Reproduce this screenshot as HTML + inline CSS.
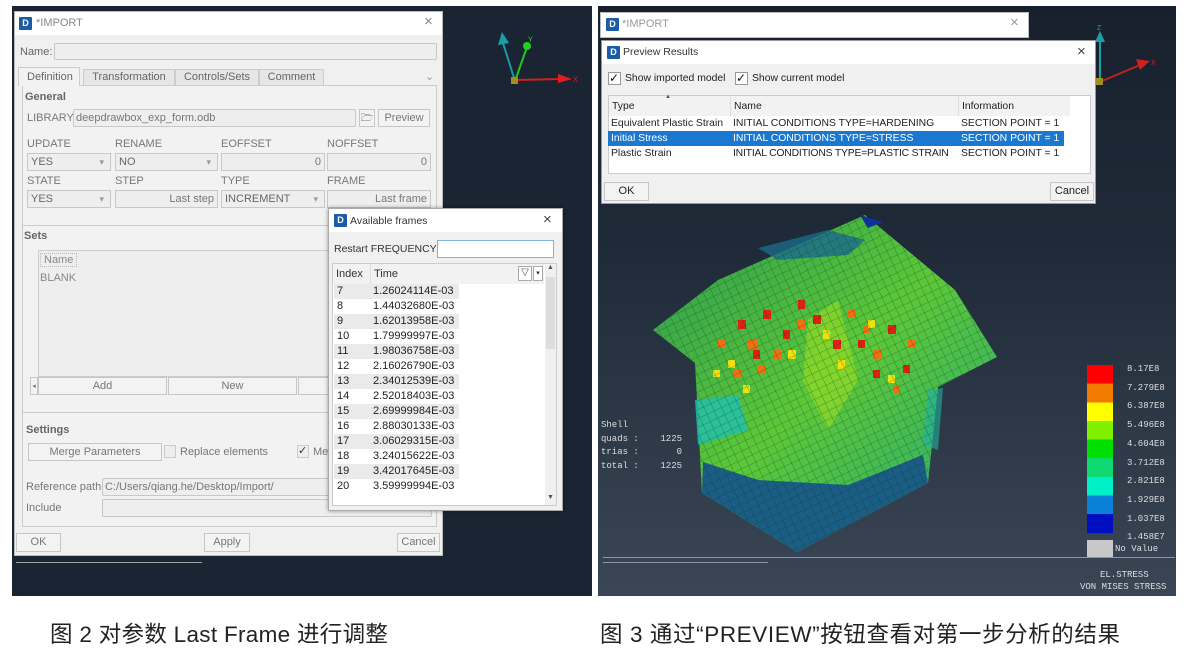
<!DOCTYPE html>
<html><head><meta charset="utf-8"><style>
*{box-sizing:border-box;margin:0;padding:0}
body{width:1192px;height:651px;background:#fff;position:relative;overflow:hidden;font-family:"Liberation Sans",sans-serif;font-size:11px;color:#333}
.a{position:absolute}
.inp{position:absolute;background:#eee;border:1px solid #c8c8c8;border-radius:2px}
.btn{position:absolute;background:#f3f3f3;border:1px solid #c6c6c6;text-align:center;color:#777;line-height:17px}
.lbl{position:absolute;color:#777;white-space:nowrap}
.cb{position:absolute;background:#eee;border:1px solid #c8c8c8;color:#666;padding-left:3px;line-height:16px}
.dd:after{content:"▾";position:absolute;right:6px;color:#999;font-size:9px}
.r{text-align:right;padding-right:3px;color:#777}
.logo{position:absolute;width:13px;height:13px;background:#1b5ca8;color:#fff;font-size:9px;font-weight:bold;text-align:center;line-height:13px;border-radius:1px}
.mono{font-family:"Liberation Mono",monospace;color:#ddd;font-size:9px}
.row{position:absolute;left:0;width:125px;height:15px;line-height:15px}
.cap{position:absolute;top:617px;font-size:22.5px;color:#222;font-family:"Liberation Sans","Noto Sans CJK SC",sans-serif;white-space:nowrap}
.pt{font-size:10.4px;color:#222}
</style></head><body>

<!-- LEFT SCREEN -->
<div class="a" style="left:12px;top:6px;width:580px;height:590px;background:#1b2433"></div>
<div class="a" style="left:16px;top:562px;width:186px;height:1px;background:#9aa"></div>
<svg class="a" style="left:480px;top:25px" width="110" height="75">
<line x1="35" y1="56" x2="23" y2="18" stroke="#1a9aa0" stroke-width="2"/><polygon points="18,20 22,7 29,18" fill="#1aa0a6"/>
<line x1="35" y1="56" x2="47" y2="22" stroke="#1ec81e" stroke-width="2"/><circle cx="47" cy="21" r="4" fill="#22d022"/>
<line x1="37" y1="55" x2="80" y2="54" stroke="#d02020" stroke-width="2"/><polygon points="78,49 92,54 78,58" fill="#e02020"/>
<rect x="31" y="52" width="7" height="7" fill="#a09020"/>
<text x="20" y="16" fill="#1a9aa0" font-size="8" font-family="Liberation Mono">Z</text>
<text x="48" y="17" fill="#2c2" font-size="8" font-family="Liberation Mono">Y</text>
<text x="93" y="57" fill="#c22" font-size="8" font-family="Liberation Mono">X</text></svg>

<div class="a" style="left:14px;top:11px;width:429px;height:545px;background:#f0f0f0;border:1px solid #bbb"></div>
<div class="a" style="left:15px;top:12px;width:427px;height:23px;background:#fff"></div>
<div class="logo" style="left:19px;top:17px">D</div>
<div class="lbl" style="left:36px;top:17px;color:#888">*IMPORT</div>
<div class="lbl" style="left:424px;top:13px;font-size:15px;color:#888">×</div>
<div class="lbl" style="left:20px;top:46px;color:#666">Name:</div>
<div class="inp" style="left:54px;top:43px;width:383px;height:17px"></div>
<div class="a" style="left:22px;top:85px;width:415px;height:442px;border:1px solid #ccc;background:#f2f2f2"></div>
<div class="a" style="left:18px;top:67px;width:62px;height:19px;background:#f2f2f2;border:1px solid #ccc;border-bottom:none;color:#666;padding:3px 0 0 8px">Definition</div>
<div class="a" style="left:83px;top:69px;width:92px;height:17px;background:#e6e6e6;border:1px solid #ccc;color:#666;text-align:center;line-height:15px">Transformation</div>
<div class="a" style="left:175px;top:69px;width:84px;height:17px;background:#e6e6e6;border:1px solid #ccc;color:#666;text-align:center;line-height:15px">Controls/Sets</div>
<div class="a" style="left:259px;top:69px;width:65px;height:17px;background:#e6e6e6;border:1px solid #ccc;color:#666;text-align:center;line-height:15px">Comment</div>
<div class="lbl" style="left:425px;top:70px;color:#999">⌄</div>
<div class="lbl" style="left:25px;top:91px;font-weight:bold;color:#666">General</div>
<div class="lbl" style="left:27px;top:112px">LIBRARY</div>
<div class="inp" style="left:73px;top:109px;width:283px;height:18px;color:#777;padding-left:2px;line-height:16px">deepdrawbox_exp_form.odb</div>
<div class="btn" style="left:359px;top:109px;width:16px;height:18px;font-size:10px">🗁</div>
<div class="btn" style="left:378px;top:109px;width:52px;height:18px">Preview</div>
<div class="lbl" style="left:27px;top:138px">UPDATE</div><div class="lbl" style="left:115px;top:138px">RENAME</div><div class="lbl" style="left:221px;top:138px">EOFFSET</div><div class="lbl" style="left:327px;top:138px">NOFFSET</div>
<div class="cb dd" style="left:27px;top:153px;width:84px;height:18px">YES</div>
<div class="cb dd" style="left:115px;top:153px;width:103px;height:18px">NO</div>
<div class="cb r" style="left:221px;top:153px;width:104px;height:18px">0</div>
<div class="cb r" style="left:327px;top:153px;width:104px;height:18px">0</div>
<div class="lbl" style="left:27px;top:175px">STATE</div><div class="lbl" style="left:115px;top:175px">STEP</div><div class="lbl" style="left:221px;top:175px">TYPE</div><div class="lbl" style="left:327px;top:175px">FRAME</div>
<div class="cb dd" style="left:27px;top:190px;width:84px;height:18px">YES</div>
<div class="cb r" style="left:115px;top:190px;width:103px;height:18px">Last step</div>
<div class="cb dd" style="left:221px;top:190px;width:104px;height:18px">INCREMENT</div>
<div class="cb r" style="left:327px;top:190px;width:104px;height:18px">Last frame</div>
<div class="a" style="left:23px;top:225px;width:413px;height:1px;background:#ccc"></div>
<div class="lbl" style="left:24px;top:230px;font-weight:bold;color:#666">Sets</div>
<div class="a" style="left:38px;top:250px;width:300px;height:127px;border:1px solid #ccc;background:#eee"></div>
<div class="lbl" style="left:40px;top:253px;border:1px dotted #bbb;padding:0 3px;color:#888">Name</div>
<div class="lbl" style="left:40px;top:272px;color:#888">BLANK</div>
<div class="btn" style="left:30px;top:377px;width:8px;height:18px;font-size:7px">◂</div>
<div class="btn" style="left:38px;top:377px;width:129px;height:18px">Add</div>
<div class="btn" style="left:168px;top:377px;width:129px;height:18px">New</div>
<div class="btn" style="left:298px;top:377px;width:40px;height:18px"></div>
<div class="a" style="left:23px;top:412px;width:413px;height:1px;background:#ccc"></div>
<div class="lbl" style="left:26px;top:424px;font-weight:bold;color:#666">Settings</div>
<div class="btn" style="left:28px;top:443px;width:134px;height:18px">Merge Parameters</div>
<div class="a" style="left:164px;top:445px;width:12px;height:13px;border:1px solid #ccc;background:#eee"></div>
<div class="lbl" style="left:180px;top:446px">Replace elements</div>
<div class="a" style="left:297px;top:445px;width:12px;height:13px;border:1px solid #ccc;background:#eee;font-size:11px;line-height:11px;color:#333">✓</div>
<div class="lbl" style="left:313px;top:446px">Me</div>
<div class="lbl" style="left:26px;top:481px">Reference path</div>
<div class="inp" style="left:102px;top:478px;width:330px;height:18px;color:#777;padding-left:2px;line-height:16px">C:/Users/qiang.he/Desktop/Import/</div>
<div class="lbl" style="left:26px;top:502px">Include</div>
<div class="inp" style="left:102px;top:499px;width:330px;height:18px"></div>
<div class="btn" style="left:16px;top:533px;width:45px;height:19px">OK</div>
<div class="btn" style="left:204px;top:533px;width:46px;height:19px">Apply</div>
<div class="btn" style="left:397px;top:533px;width:43px;height:19px">Cancel</div>

<!-- Available frames -->
<div class="a" style="left:328px;top:208px;width:235px;height:303px;background:#f0f0f0;border:1px solid #aaa;box-shadow:0 0 4px rgba(0,0,0,.4)"></div>
<div class="a" style="left:329px;top:209px;width:233px;height:23px;background:#fff"></div>
<div class="logo" style="left:334px;top:214px">D</div>
<div class="lbl" style="left:350px;top:215px;color:#333;font-size:10.5px">Available frames</div>
<div class="lbl" style="left:543px;top:211px;font-size:15px;color:#444">×</div>
<div class="lbl" style="left:334px;top:243px;color:#333;font-size:10.5px">Restart FREQUENCY</div>
<div class="a" style="left:437px;top:240px;width:117px;height:18px;background:#fff;border:1px solid #7fb4e0"></div>
<div class="a" style="left:332px;top:263px;width:225px;height:243px;background:#fff;border:1px solid #ccc"></div>
<div class="a" style="left:333px;top:264px;width:211px;height:20px;background:#f2f2f2"></div>
<div class="lbl" style="left:336px;top:268px;color:#333">Index</div>
<div class="a" style="left:370px;top:264px;width:1px;height:20px;background:#ddd"></div>
<div class="lbl" style="left:374px;top:268px;color:#333">Time</div>
<div class="a" style="left:518px;top:266px;width:14px;height:15px;border:1px solid #aaa;background:#fff;font-size:10px;text-align:center;color:#555">▽</div>
<div class="a" style="left:533px;top:266px;width:10px;height:15px;border:1px solid #aaa;background:#fff;font-size:7px;text-align:center;line-height:14px">▾</div>
<div class="a" style="left:545px;top:264px;width:11px;height:241px;background:#f0f0f0"></div>
<div class="a" style="left:546px;top:277px;width:9px;height:72px;background:#ddd"></div>
<div class="lbl" style="left:547px;top:264px;font-size:7px;color:#555">▲</div>
<div class="lbl" style="left:547px;top:494px;font-size:7px;color:#555">▼</div>
<div class="a" style="left:334px;top:284px;width:125px;height:210px;color:#222">
<div class="row" style="top:0;background:#eaeaea">&nbsp;7<span class="a" style="left:39px">1.26024114E-03</span></div>
<div class="row" style="top:15px">&nbsp;8<span class="a" style="left:39px">1.44032680E-03</span></div>
<div class="row" style="top:30px;background:#eaeaea">&nbsp;9<span class="a" style="left:39px">1.62013958E-03</span></div>
<div class="row" style="top:45px">&nbsp;10<span class="a" style="left:39px">1.79999997E-03</span></div>
<div class="row" style="top:60px;background:#eaeaea">&nbsp;11<span class="a" style="left:39px">1.98036758E-03</span></div>
<div class="row" style="top:75px">&nbsp;12<span class="a" style="left:39px">2.16026790E-03</span></div>
<div class="row" style="top:90px;background:#eaeaea">&nbsp;13<span class="a" style="left:39px">2.34012539E-03</span></div>
<div class="row" style="top:105px">&nbsp;14<span class="a" style="left:39px">2.52018403E-03</span></div>
<div class="row" style="top:120px;background:#eaeaea">&nbsp;15<span class="a" style="left:39px">2.69999984E-03</span></div>
<div class="row" style="top:135px">&nbsp;16<span class="a" style="left:39px">2.88030133E-03</span></div>
<div class="row" style="top:150px;background:#eaeaea">&nbsp;17<span class="a" style="left:39px">3.06029315E-03</span></div>
<div class="row" style="top:165px">&nbsp;18<span class="a" style="left:39px">3.24015622E-03</span></div>
<div class="row" style="top:180px;background:#eaeaea">&nbsp;19<span class="a" style="left:39px">3.42017645E-03</span></div>
<div class="row" style="top:195px">&nbsp;20<span class="a" style="left:39px">3.59999994E-03</span></div>
</div>

<!-- RIGHT SCREEN -->
<div class="a" style="left:598px;top:6px;width:578px;height:590px;background:linear-gradient(#18202d 0%,#1f2a38 40%,#3a4655 100%)"></div>
<svg class="a" style="left:1080px;top:25px" width="95" height="70">
<line x1="20" y1="57" x2="20" y2="15" stroke="#1aa0a6" stroke-width="2"/><polygon points="15,17 20,6 25,17" fill="#1aa0a6"/>
<line x1="22" y1="56" x2="60" y2="40" stroke="#c02020" stroke-width="2"/><polygon points="56,34 70,36 60,45" fill="#d02020"/>
<rect x="16" y="53" width="7" height="7" fill="#a09020"/>
<text x="17" y="5" fill="#1aa0a6" font-size="7" font-family="Liberation Mono">Z</text>
<text x="71" y="40" fill="#c22" font-size="8" font-family="Liberation Mono">X</text></svg>

<svg class="a" style="left:598px;top:200px" width="560" height="370">
<defs><pattern id="g" width="8" height="8" patternUnits="userSpaceOnUse" patternTransform="rotate(-25)"><path d="M0 0H8M0 0V8" stroke="#103020" stroke-width="0.8" fill="none" opacity=".55"/></pattern>
<linearGradient id="lg" x1="0" y1="0" x2="1" y2="1"><stop offset="0" stop-color="#2a9a50"/><stop offset=".5" stop-color="#5cc838"/><stop offset="1" stop-color="#22a878"/></linearGradient></defs>
<polygon points="55,130 120,80 267,15 357,90 399,157 340,187 330,283 199,352 104,293 97,163" fill="url(#lg)"/>
<polygon points="104,293 199,352 330,283 325,255 250,285 160,280 105,262" fill="#1a5e86"/>
<polygon points="97,200 140,195 150,230 100,245" fill="#20c0b0" opacity=".8"/>
<polygon points="330,190 345,188 340,250 325,245" fill="#20b0a0" opacity=".6"/>
<polygon points="160,48 230,30 267,40 250,55 180,60" fill="#1a6a8a" opacity=".8"/>
<polygon points="262,15 285,22 270,28" fill="#1030a0"/>
<polygon points="210,120 240,100 260,180 230,230 205,180" fill="#a0e020" opacity=".55"/>
<g fill="#e02010"><rect x="140" y="120" width="8" height="9"/><rect x="165" y="110" width="8" height="9"/><rect x="185" y="130" width="7" height="9"/><rect x="215" y="115" width="8" height="9"/><rect x="235" y="140" width="8" height="9"/><rect x="260" y="140" width="7" height="8"/><rect x="290" y="125" width="8" height="9"/><rect x="305" y="165" width="7" height="8"/><rect x="200" y="100" width="7" height="9"/><rect x="275" y="170" width="7" height="8"/><rect x="155" y="150" width="7" height="9"/></g>
<g fill="#f07010"><rect x="120" y="140" width="8" height="8"/><rect x="150" y="140" width="9" height="9"/><rect x="175" y="150" width="8" height="9"/><rect x="200" y="120" width="8" height="9"/><rect x="250" y="110" width="8" height="8"/><rect x="275" y="150" width="8" height="9"/><rect x="310" y="140" width="8" height="8"/><rect x="160" y="165" width="8" height="9"/><rect x="135" y="170" width="8" height="8"/><rect x="295" y="185" width="7" height="8"/><rect x="265" y="125" width="7" height="8"/></g>
<g fill="#f0e010"><rect x="130" y="160" width="7" height="8"/><rect x="190" y="150" width="8" height="9"/><rect x="225" y="130" width="7" height="9"/><rect x="270" y="120" width="7" height="8"/><rect x="290" y="175" width="7" height="8"/><rect x="115" y="170" width="7" height="7"/><rect x="145" y="185" width="7" height="8"/><rect x="240" y="160" width="7" height="9"/></g>
<polygon points="55,130 120,80 267,15 357,90 399,157 340,187 330,283 199,352 104,293 97,163" fill="url(#g)"/>
</svg>

<div class="a mono" style="left:601px;top:419px;line-height:13.5px;white-space:pre">Shell
quads :    1225
trias :       0
total :    1225</div>

<div class="a" style="left:1087px;top:365px;width:26px;height:168px;background:linear-gradient(#f00 0 11.1%,#f37a00 11.1% 22.2%,#ff0 22.2% 33.3%,#80f000 33.3% 44.4%,#00e000 44.4% 55.5%,#10d870 55.5% 66.6%,#00f0c8 66.6% 77.7%,#0a80d8 77.7% 88.8%,#0010c0 88.8% 100%)"></div>
<div class="a" style="left:1087px;top:540px;width:26px;height:17px;background:#c8c8c8"></div>
<div class="a mono" style="left:1127px;top:360px;line-height:18.7px;white-space:pre">8.17E8
7.279E8
6.387E8
5.496E8
4.604E8
3.712E8
2.821E8
1.929E8
1.037E8
1.458E7</div>
<div class="a mono" style="left:1115px;top:544px">No Value</div>
<div class="a" style="left:603px;top:557px;width:572px;height:1px;background:#8a96a2"></div>
<div class="a" style="left:603px;top:562px;width:165px;height:1px;background:#8a96a2"></div>
<div class="a mono" style="left:1100px;top:570px">EL.STRESS</div>
<div class="a mono" style="left:1080px;top:582px">VON MISES STRESS</div>

<div class="a" style="left:600px;top:12px;width:429px;height:26px;background:#fff;border:1px solid #bbb"></div>
<div class="logo" style="left:606px;top:18px">D</div>
<div class="lbl" style="left:622px;top:18px;color:#999">*IMPORT</div>
<div class="lbl" style="left:1010px;top:14px;font-size:15px;color:#999">×</div>

<div class="a" style="left:601px;top:40px;width:495px;height:164px;background:#f0f0f0;border:1px solid #999"></div>
<div class="a" style="left:602px;top:41px;width:493px;height:23px;background:#fff"></div>
<div class="logo" style="left:607px;top:46px">D</div>
<div class="lbl" style="left:623px;top:46px;color:#333;font-size:10.5px">Preview Results</div>
<div class="lbl" style="left:1077px;top:43px;font-size:15px;color:#444">×</div>
<div class="a" style="left:608px;top:72px;width:13px;height:13px;background:#fff;border:1px solid #999;font-size:12px;line-height:11px;color:#111">✓</div>
<div class="lbl pt" style="left:625px;top:73px">Show imported model</div>
<div class="a" style="left:735px;top:72px;width:13px;height:13px;background:#fff;border:1px solid #999;font-size:12px;line-height:11px;color:#111">✓</div>
<div class="lbl pt" style="left:752px;top:73px">Show current model</div>
<div class="a" style="left:608px;top:95px;width:483px;height:79px;background:#fff;border:1px solid #ccc"></div>
<div class="a" style="left:609px;top:96px;width:461px;height:20px;background:#f2f2f2"></div>
<div class="a" style="left:730px;top:96px;width:1px;height:20px;background:#ddd"></div>
<div class="a" style="left:958px;top:96px;width:1px;height:20px;background:#ddd"></div>
<div class="lbl pt" style="left:612px;top:101px">Type</div>
<div class="lbl" style="left:665px;top:94px;font-size:6px;color:#555">▲</div>
<div class="lbl pt" style="left:734px;top:101px">Name</div>
<div class="lbl pt" style="left:962px;top:101px">Information</div>
<div class="a" style="left:608px;top:131px;width:456px;height:15px;background:#1a78d0"></div>
<div class="lbl pt" style="left:611px;top:118px">Equivalent Plastic Strain</div>
<div class="lbl pt" style="left:733px;top:118px">INITIAL CONDITIONS TYPE=HARDENING</div>
<div class="lbl pt" style="left:961px;top:118px">SECTION POINT = 1</div>
<div class="lbl pt" style="left:611px;top:133px;color:#fff">Initial Stress</div>
<div class="lbl pt" style="left:733px;top:133px;color:#fff">INITIAL CONDITIONS TYPE=STRESS</div>
<div class="lbl pt" style="left:961px;top:133px;color:#fff">SECTION POINT = 1</div>
<div class="lbl pt" style="left:611px;top:148px">Plastic Strain</div>
<div class="lbl pt" style="left:733px;top:148px;letter-spacing:-0.2px">INITIAL CONDITIONS TYPE=PLASTIC STRAIN</div>
<div class="lbl pt" style="left:961px;top:148px">SECTION POINT = 1</div>
<div class="btn" style="left:604px;top:182px;width:45px;height:19px;color:#222">OK</div>
<div class="btn" style="left:1050px;top:182px;width:44px;height:19px;color:#222">Cancel</div>

<div class="cap" style="left:50px;letter-spacing:0.3px">图 2 对参数 Last Frame 进行调整</div>
<div class="cap" style="left:600px;letter-spacing:0.6px">图 3 通过“PREVIEW”按钮查看对第一步分析的结果</div>
</body></html>
